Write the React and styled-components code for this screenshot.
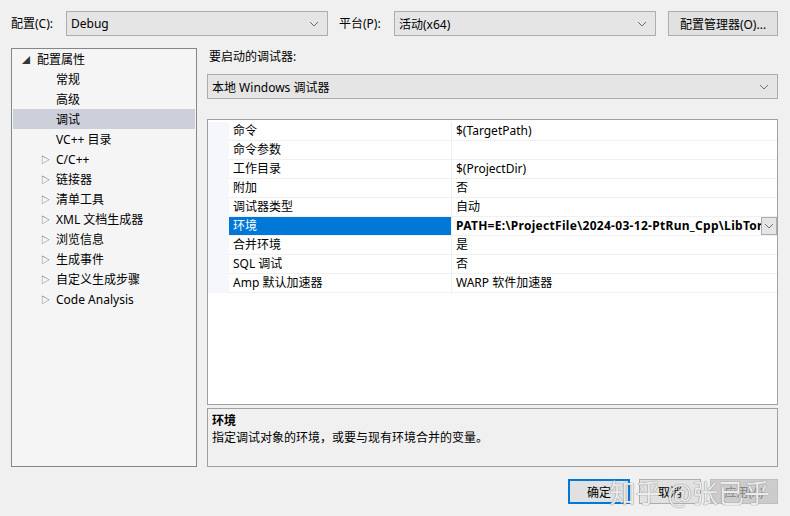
import styled, { createGlobalStyle } from 'styled-components'

const GlobalStyle = createGlobalStyle`
  html, body {
    margin: 0;
    padding: 0;
    background: #f0f0f0;
  }
  body {
    font-family: "Noto Sans", "Noto Sans CJK SC", sans-serif;
    font-size: 12px;
    color: #000;
  }
`

const tree = [
  { label: '常规' },
  { label: '高级' },
  { label: '调试', selected: true },
  { label: 'VC++ 目录' },
  { label: 'C/C++', arrow: true },
  { label: '链接器', arrow: true },
  { label: '清单工具', arrow: true },
  { label: 'XML 文档生成器', arrow: true },
  { label: '浏览信息', arrow: true },
  { label: '生成事件', arrow: true },
  { label: '自定义生成步骤', arrow: true },
  { label: 'Code Analysis', arrow: true },
]

const props = [
  ['命令', '$(TargetPath)'],
  ['命令参数', ''],
  ['工作目录', '$(ProjectDir)'],
  ['附加', '否'],
  ['调试器类型', '自动'],
  ['环境', 'PATH=E:\\ProjectFile\\2024-03-12-PtRun_Cpp\\LibTorch\\lib;%PATH%', true],
  ['合并环境', '是'],
  ['SQL 调试', '否'],
  ['Amp 默认加速器', 'WARP 软件加速器'],
]

const Chevron = () => (
  <svg width="10" height="6" viewBox="0 0 10 6">
    <path d="M1 1 L5 5 L9 1" fill="none" stroke="#707070" strokeWidth="1" />
  </svg>
)

const App = () => {
  return (
    <Page>
      <GlobalStyle />
      <TopRow>
        <Label>配置(C):</Label>
        <Combo $width={262}>
          <span>Debug</span>
          <Chevron />
        </Combo>
        <Label style={{ marginLeft: 11 }}>平台(P):</Label>
        <Combo $width={262}>
          <span>活动(x64)</span>
          <Chevron />
        </Combo>
        <Button $width={110} style={{ marginLeft: 12 }}>配置管理器(O)...</Button>
      </TopRow>

      <Main>
        <Tree>
          <TreeItem>
            <Expanded>◢</Expanded>
            配置属性
          </TreeItem>
          {tree.map((t) => (
            <TreeItem key={t.label} $child $selected={t.selected}>
              <Arrow>{t.arrow ? '▷' : ''}</Arrow>
              {t.label}
            </TreeItem>
          ))}
        </Tree>

        <Right>
          <FieldLabel>要启动的调试器:</FieldLabel>
          <WideCombo>
            <span>本地 Windows 调试器</span>
            <Chevron />
          </WideCombo>

          <Grid>
            {props.map(([name, value, selected]) => (
              <GridRow key={name}>
                <Margin />
                <NameCell $selected={selected}>{name}</NameCell>
                <ValueCell $bold={selected}>
                  <span>{value}</span>
                  {selected && (
                    <CellButton>
                      <Chevron />
                    </CellButton>
                  )}
                </ValueCell>
              </GridRow>
            ))}
          </Grid>

          <Description>
            <DescTitle>环境</DescTitle>
            <div>指定调试对象的环境，或要与现有环境合并的变量。</div>
          </Description>
        </Right>
      </Main>

      <Footer>
        <Button $width={62} $default>确定</Button>
        <Button $width={62}>取消</Button>
        <Button $width={68} $disabled>应用(A)</Button>
        <Watermark>知乎 @张已乎</Watermark>
      </Footer>
    </Page>
  )
}

export default App

const Page = styled.div`
  width: 790px;
  height: 516px;
  box-sizing: border-box;
  padding: 11px 12px 0 11px;
  background: #f0f0f0;
  overflow: hidden;
`

const TopRow = styled.div`
  display: flex;
  align-items: center;
  height: 25px;
`

const Label = styled.div`
  width: 55px;
  flex: none;
  line-height: 25px;
`

const Combo = styled.div`
  box-sizing: border-box;
  width: ${(p) => p.$width}px;
  height: 25px;
  display: flex;
  align-items: center;
  justify-content: space-between;
  padding: 0 8px 0 4px;
  background: #e5e5e5;
  border: 1px solid #adadad;
`

const Button = styled.div`
  position: relative;
  z-index: 0;
  box-sizing: border-box;
  width: ${(p) => p.$width}px;
  height: 25px;
  display: flex;
  align-items: center;
  justify-content: center;
  background: ${(p) => (p.$disabled ? '#cccccc' : '#e1e1e1')};
  color: ${(p) => (p.$disabled ? '#838383' : '#000')};
  border: ${(p) => (p.$default ? '2px solid #0078d7' : p.$disabled ? '1px solid #bfbfbf' : '1px solid #adadad')};
`

const Main = styled.div`
  display: grid;
  grid-template-columns: 186px 1fr;
  column-gap: 10px;
  margin-top: 12px;
  height: 419px;
`

const Tree = styled.div`
  box-sizing: border-box;
  background: #f5f5f5;
  border: 1px solid #828790;
  padding: 0 1px;
`

const TreeItem = styled.div`
  display: flex;
  align-items: center;
  height: 20px;
  padding-left: ${(p) => (p.$child ? 28 : 9)}px;
  background: ${(p) => (p.$selected ? '#cdd0db' : 'transparent')};
`

const Expanded = styled.span`
  width: 15px;
  font-size: 8px;
  color: #333;
`

const Arrow = styled.span`
  width: 15px;
  font-size: 9px;
  color: #555;
`

const Right = styled.div`
  display: flex;
  flex-direction: column;
`

const FieldLabel = styled.div`
  height: 17px;
  padding-left: 2px;
  line-height: 17px;
`

const WideCombo = styled(Combo)`
  width: 100%;
  margin-top: 9px;
`

const Grid = styled.div`
  box-sizing: border-box;
  margin-top: 20px;
  height: 286px;
  background: #fff;
  border: 1px solid #a0a0a0;
  padding-top: 2px;
`

const GridRow = styled.div`
  display: grid;
  grid-template-columns: 21px 223px 1fr;
  height: 19px;
`

const Margin = styled.div`
  background: #f5f7fa;
`

const NameCell = styled.div`
  box-sizing: border-box;
  padding-left: 4px;
  line-height: 18px;
  border-bottom: 1px solid #f0f0f0;
  border-right: 1px solid #f0f0f0;
  background: ${(p) => (p.$selected ? '#0078d7' : '#fff')};
  color: ${(p) => (p.$selected ? '#fff' : '#000')};
  white-space: nowrap;
`

const ValueCell = styled.div`
  position: relative;
  box-sizing: border-box;
  padding-left: 4px;
  line-height: 18px;
  border-bottom: 1px solid #f0f0f0;
  font-weight: ${(p) => (p.$bold ? 700 : 400)};
  letter-spacing: ${(p) => (p.$bold ? '0.3px' : '0')};
  white-space: nowrap;
  overflow: hidden;
`

const CellButton = styled.div`
  position: absolute;
  top: 0;
  right: 0;
  width: 16px;
  height: 18px;
  box-sizing: border-box;
  display: flex;
  align-items: center;
  justify-content: center;
  background: #e5e5e5;
  border: 1px solid #adadad;
`

const Description = styled.div`
  box-sizing: border-box;
  margin-top: 3px;
  height: 59px;
  border: 1px solid #a0a0a0;
  padding: 3px 4px;
  line-height: 17px;
`

const DescTitle = styled.div`
  font-weight: 700;
`

const Footer = styled.div`
  position: relative;
  display: flex;
  justify-content: flex-end;
  gap: 9px;
  margin-top: 12px;
`

const Watermark = styled.div`
  position: absolute;
  right: 8px;
  top: -6px;
  z-index: 1;
  font-family: "Noto Sans CJK SC", sans-serif;
  font-size: 26px;
  color: rgba(255, 255, 255, 0.85);
  text-shadow: 0 0 1px #888, 0 0 1px #888;
  pointer-events: none;
  white-space: nowrap;
`
